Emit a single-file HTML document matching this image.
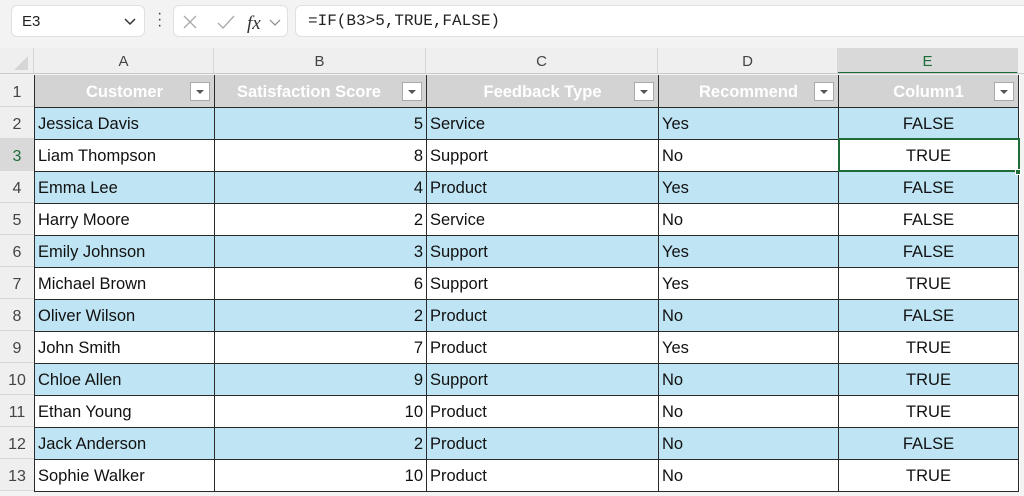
<!DOCTYPE html>
<html><head><meta charset="utf-8"><style>
*{box-sizing:border-box;margin:0;padding:0}
body{width:1024px;height:496px;overflow:hidden;background:#f3f3f3;font-family:"Liberation Sans",Arial,sans-serif;position:relative}
.box{position:absolute;background:#fff;border:1px solid #e0e0e0;border-radius:6px}
.ch{position:absolute;top:48px;height:26px;font-size:15px;color:#444;text-align:center;line-height:28px;border-right:1px solid #d8d8d8;background:#efefef}
.rh{position:absolute;left:0;width:34px;height:32px;font-size:16px;color:#444;text-align:center;line-height:36px;background:#efefef;border-bottom:1px solid #d8d8d8}
table{position:absolute;left:34px;top:75px;border-collapse:collapse;table-layout:fixed;background:#fff}
td{height:32px;border:1.5px solid #2a2a2a;font-size:16.5px;color:#111;padding:3px 3px 0;white-space:nowrap;overflow:hidden;position:relative}
tr.h td{height:32px;background:#d3d3d3;color:#fff;font-weight:bold;text-align:center;border-top:none}
tr.b td{background:#bfe4f3}
.r{text-align:right}.c{text-align:center}
.dd{position:absolute;right:4px;top:7px;width:20px;height:19px;background:#fff;border:1px solid #aaa}
.dd:after{content:"";position:absolute;left:5px;top:7px;border-left:4px solid transparent;border-right:4px solid transparent;border-top:4px solid #555}
</style></head><body>
<div class="box" style="left:11px;top:5px;width:134px;height:32px"><span style="position:absolute;left:10px;top:7px;font-size:15px;color:#222">E3</span><svg style="position:absolute;right:8px;top:12px" width="12" height="8"><path d="M1 1l5 5 5-5" stroke="#333" stroke-width="1.5" fill="none"/></svg></div>
<div style="position:absolute;left:157px;top:11px;font-size:16px;color:#444;line-height:6px">·<br>·<br>·</div>
<div class="box" style="left:173px;top:5px;width:115px;height:32px">
<svg width="115" height="32"><path d="M10 10l12 12M22 10L10 22" stroke="#aaa" stroke-width="1.3"/><path d="M44 17l5 5 11-12" stroke="#aaa" stroke-width="1.3" fill="none"/><text x="73" y="23" font-family="Liberation Serif" font-style="italic" font-size="19" fill="#333">fx</text><path d="M96 14l5 5 5-5" stroke="#888" stroke-width="1.2" fill="none"/></svg></div>
<div class="box" style="left:295px;top:5px;width:740px;height:32px"><span style="position:absolute;left:12px;top:6px;font-family:'Liberation Mono',monospace;font-size:16px;color:#222">=IF(B3&gt;5,TRUE,FALSE)</span></div>
<div style="position:absolute;left:0;top:48px;width:34px;height:26px;background:#efefef;border-right:1px solid #d8d8d8"><div style="position:absolute;right:5px;bottom:4px;border-left:14px solid transparent;border-bottom:14px solid #d6d6d6"></div></div>
<div class="ch" style="left:34px;width:180px">A</div>
<div class="ch" style="left:214px;width:212px">B</div>
<div class="ch" style="left:426px;width:232px">C</div>
<div class="ch" style="left:658px;width:180px">D</div>
<div class="ch" style="left:838px;width:180px;background:#d9d9d9;color:#1e6b3a;border-bottom:2px solid #1e6b3a">E</div>
<div style="position:absolute;left:0;top:73px;width:1024px;height:1px;background:#c8c8c8"></div>
<div class="rh" style="top:75px">1</div><div class="rh" style="top:107px">2</div><div class="rh" style="top:139px;background:#d9d9d9;color:#1e6b3a">3</div><div class="rh" style="top:171px">4</div><div class="rh" style="top:203px">5</div><div class="rh" style="top:235px">6</div><div class="rh" style="top:267px">7</div><div class="rh" style="top:299px">8</div><div class="rh" style="top:331px">9</div><div class="rh" style="top:363px">10</div><div class="rh" style="top:395px">11</div><div class="rh" style="top:427px">12</div><div class="rh" style="top:459px">13</div>
<table>
<colgroup><col style="width:180px"><col style="width:212px"><col style="width:232px"><col style="width:180px"><col style="width:180px"></colgroup>
<tr class="h"><td>Customer<span class="dd"></span></td><td style="text-align:left;padding-left:22px">Satisfaction Score<span class="dd"></span></td><td>Feedback Type<span class="dd"></span></td><td>Recommend<span class="dd"></span></td><td>Column1<span class="dd"></span></td></tr>
<tr class="b"><td>Jessica Davis</td><td class="r">5</td><td>Service</td><td>Yes</td><td class="c">FALSE</td></tr>
<tr><td>Liam Thompson</td><td class="r">8</td><td>Support</td><td>No</td><td class="c" style="border:2px solid #1e6b3a">TRUE</td></tr>
<tr class="b"><td>Emma Lee</td><td class="r">4</td><td>Product</td><td>Yes</td><td class="c">FALSE</td></tr>
<tr><td>Harry Moore</td><td class="r">2</td><td>Service</td><td>No</td><td class="c">FALSE</td></tr>
<tr class="b"><td>Emily Johnson</td><td class="r">3</td><td>Support</td><td>Yes</td><td class="c">FALSE</td></tr>
<tr><td>Michael Brown</td><td class="r">6</td><td>Support</td><td>Yes</td><td class="c">TRUE</td></tr>
<tr class="b"><td>Oliver Wilson</td><td class="r">2</td><td>Product</td><td>No</td><td class="c">FALSE</td></tr>
<tr><td>John Smith</td><td class="r">7</td><td>Product</td><td>Yes</td><td class="c">TRUE</td></tr>
<tr class="b"><td>Chloe Allen</td><td class="r">9</td><td>Support</td><td>No</td><td class="c">TRUE</td></tr>
<tr><td>Ethan Young</td><td class="r">10</td><td>Product</td><td>No</td><td class="c">TRUE</td></tr>
<tr class="b"><td>Jack Anderson</td><td class="r">2</td><td>Product</td><td>No</td><td class="c">FALSE</td></tr>
<tr><td>Sophie Walker</td><td class="r">10</td><td>Product</td><td>No</td><td class="c">TRUE</td></tr>
</table>
<div style="position:absolute;left:1015px;top:169px;width:6px;height:6px;background:#1e6b3a;border:1px solid #fff"></div>
</body></html>
